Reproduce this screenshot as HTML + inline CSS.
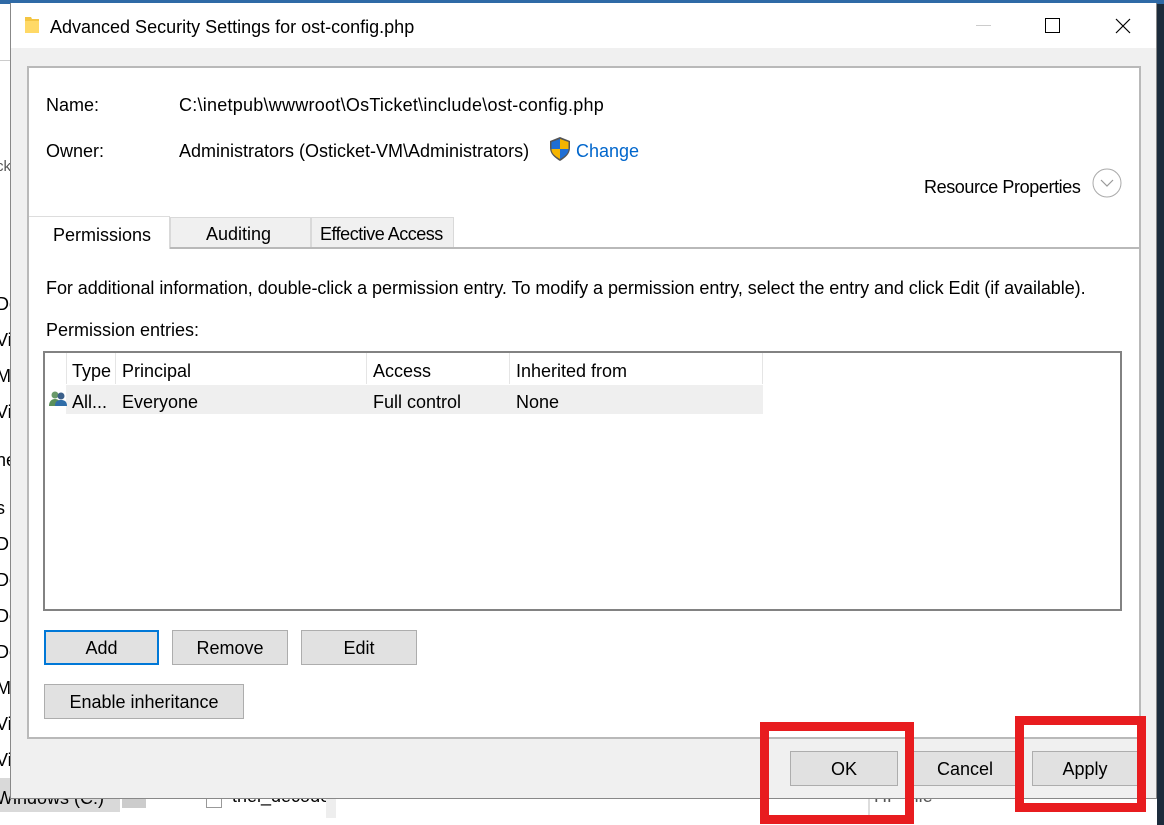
<!DOCTYPE html>
<html><head><style>
*{margin:0;padding:0;box-sizing:border-box}
body{width:1164px;height:825px;position:relative;overflow:hidden;background:#fff;font-family:"Liberation Sans",sans-serif;font-size:18px;color:#000}
.a{position:absolute}
.t{position:absolute;white-space:nowrap;line-height:20px}
.btn{position:absolute;background:#e1e1e1;border:1px solid #adadad;text-align:center;line-height:35px}
.red{position:absolute;border:9px solid #e81c1f}
</style></head><body>
<div class="a" style="left:1157px;top:0;width:7px;height:825px;background:#1c2c3c"></div>
<div class="a" style="left:0;top:0;width:1164px;height:4px;background:#2f6aa6"></div>
<div class="a" style="left:0;top:60px;width:10px;height:1px;background:#ccc"></div>
<div class="t" style="left:-4px;top:157px;color:#555;font-size:15px">ck</div>
<div class="t" style="left:-4px;top:294px">Do</div><div class="t" style="left:-4px;top:330px">Vic</div><div class="t" style="left:-4px;top:366px">Mu</div><div class="t" style="left:-4px;top:402px">Vic</div><div class="t" style="left:-4px;top:450px">ne</div><div class="t" style="left:-4px;top:498px">s</div><div class="t" style="left:-4px;top:534px">D</div><div class="t" style="left:-4px;top:570px">De</div><div class="t" style="left:-4px;top:606px">Do</div><div class="t" style="left:-4px;top:642px">Do</div><div class="t" style="left:-4px;top:678px">Mu</div><div class="t" style="left:-4px;top:714px">Vic</div><div class="t" style="left:-4px;top:750px">Vic</div>
<div class="a" style="left:0;top:778px;width:120px;height:34px;background:#d9d9d9"></div>
<div class="t" style="left:-4px;top:788px">Windows (C:)</div>
<div class="a" style="left:122px;top:798px;width:24px;height:10px;background:#ccc"></div>
<div class="a" style="left:206px;top:798px;width:16px;height:10px;border:1px solid #999;border-top:0"></div>
<div class="t" style="left:232px;top:786px">thei_decode</div>
<div class="a" style="left:326px;top:798px;width:10px;height:20px;background:#eee"></div>
<div class="a" style="left:868px;top:798px;width:2px;height:20px;background:#ddd"></div>
<div class="t" style="left:874px;top:786px;color:#555">HP File</div>

<div class="a" style="left:10px;top:3px;width:1147px;height:796px;background:#f0f0f0;border:1px solid #888;border-top:0"></div>
<div class="a" style="left:10px;top:3px;width:1147px;height:45px;background:#fff;border-left:1px solid #888;border-right:1px solid #888"></div>
<svg class="a" style="left:24px;top:15px" width="16" height="20"><path d="M1 2h6l1 2h7v14H1z" fill="#f4c542"/><path d="M1 6h14v12H1z" fill="#ffd966"/></svg>
<div class="t" style="left:50px;top:17px">Advanced Security Settings for ost-config.php</div>
<div class="a" style="left:976px;top:25px;width:15px;height:1px;background:#ccc"></div>
<div class="a" style="left:1045px;top:18px;width:15px;height:15px;border:1px solid #000"></div>
<svg class="a" style="left:1115px;top:18px" width="16" height="16"><path d="M1 1L15 15M15 1L1 15" stroke="#000" stroke-width="1.2"/></svg>

<div class="a" style="left:27px;top:66px;width:1114px;height:673px;background:#fff;border:2px solid #b9b9b9"></div>
<div class="t" style="left:46px;top:95px">Name:</div>
<div class="t" style="left:179px;top:95px;letter-spacing:0.25px">C:\inetpub\wwwroot\OsTicket\include\ost-config.php</div>
<div class="t" style="left:46px;top:141px">Owner:</div>
<div class="t" style="left:179px;top:141px">Administrators (Osticket-VM\Administrators)</div>
<svg class="a" style="left:548px;top:136px" width="24" height="26"><path d="M12 1L22 5V12C22 18 17 22 12 25C7 22 2 18 2 12V5Z" fill="#555"/><path d="M12 3V13H3.5V6Z" fill="#1f6ed4"/><path d="M12 3L20.5 6V13H12Z" fill="#f5b400"/><path d="M3.5 13H12V23C7.5 20.5 3.5 17.5 3.5 13Z" fill="#f5b400"/><path d="M12 13H20.5C20.5 17.5 16.5 20.5 12 23Z" fill="#1f6ed4"/></svg>
<div class="t" style="left:576px;top:141px;color:#0066cc">Change</div>
<div class="t" style="left:924px;top:177px;letter-spacing:-0.4px">Resource Properties</div>
<svg class="a" style="left:1092px;top:168px" width="32" height="32"><circle cx="15" cy="15" r="14" fill="none" stroke="#aaa" stroke-width="1"/><path d="M9 12l6 6 6-6" fill="none" stroke="#999" stroke-width="1.2"/></svg>

<div class="a" style="left:29px;top:247px;width:1110px;height:2px;background:#b9b9b9"></div>
<div class="a" style="left:29px;top:216px;width:141px;height:33px;background:#fff;border-top:1px solid #ddd;border-right:1px solid #d9d9d9"></div>
<div class="t" style="left:53px;top:225px">Permissions</div>
<div class="a" style="left:170px;top:217px;width:141px;height:30px;background:#f0f0f0;border:1px solid #d9d9d9;border-bottom:0"></div>
<div class="t" style="left:206px;top:224px">Auditing</div>
<div class="a" style="left:311px;top:217px;width:143px;height:30px;background:#f0f0f0;border:1px solid #d9d9d9;border-bottom:0"></div>
<div class="t" style="left:320px;top:224px;letter-spacing:-0.5px">Effective Access</div>

<div class="t" style="left:46px;top:278px;letter-spacing:-0.05px">For additional information, double-click a permission entry. To modify a permission entry, select the entry and click Edit (if available).</div>
<div class="t" style="left:46px;top:320px">Permission entries:</div>

<div class="a" style="left:43px;top:351px;width:1079px;height:260px;border:2px solid #828282;background:#fff"></div>
<div class="a" style="left:66px;top:353px;width:1px;height:31px;background:#e5e5e5"></div>
<div class="a" style="left:115px;top:353px;width:1px;height:31px;background:#e5e5e5"></div>
<div class="a" style="left:366px;top:353px;width:1px;height:31px;background:#e5e5e5"></div>
<div class="a" style="left:509px;top:353px;width:1px;height:31px;background:#e5e5e5"></div>
<div class="a" style="left:762px;top:353px;width:1px;height:31px;background:#e5e5e5"></div>
<div class="t" style="left:72px;top:361px">Type</div>
<div class="t" style="left:122px;top:361px">Principal</div>
<div class="t" style="left:373px;top:361px">Access</div>
<div class="t" style="left:516px;top:361px">Inherited from</div>
<div class="a" style="left:66px;top:385px;width:697px;height:29px;background:#efefef"></div>
<svg class="a" style="left:49px;top:390px" width="18" height="17"><circle cx="6" cy="5" r="3.5" fill="#6a9a6a"/><path d="M0 16c0-5 3-7 6-7s6 2 6 7z" fill="#5a8f5a"/><circle cx="12" cy="6" r="3.5" fill="#3a5f8a"/><path d="M6 16c0-5 3-6 6-6s6 1 6 6z" fill="#2f6da8"/></svg>
<div class="t" style="left:72px;top:392px">All...</div>
<div class="t" style="left:122px;top:392px">Everyone</div>
<div class="t" style="left:373px;top:392px">Full control</div>
<div class="t" style="left:516px;top:392px">None</div>

<div class="btn" style="left:44px;top:630px;width:115px;height:35px;border:2px solid #0078d7;line-height:33px">Add</div>
<div class="btn" style="left:172px;top:630px;width:116px;height:35px">Remove</div>
<div class="btn" style="left:301px;top:630px;width:116px;height:35px">Edit</div>
<div class="btn" style="left:44px;top:684px;width:200px;height:35px">Enable inheritance</div>

<div class="btn" style="left:790px;top:751px;width:108px;height:35px">OK</div>
<div class="btn" style="left:911px;top:751px;width:108px;height:35px">Cancel</div>
<div class="btn" style="left:1032px;top:751px;width:106px;height:35px">Apply</div>

<div class="red" style="left:760px;top:722px;width:154px;height:102px"></div>
<div class="red" style="left:1015px;top:716px;width:131px;height:96px"></div>
</body></html>
